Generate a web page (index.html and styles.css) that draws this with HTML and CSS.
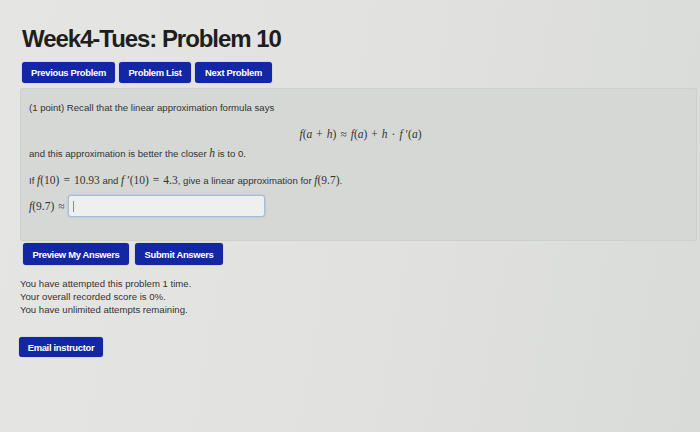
FILE: index.html
```html
<!DOCTYPE html>
<html lang="en">
<head>
<meta charset="utf-8">
<title>Week4-Tues: Problem 10</title>
<link rel="stylesheet" href="styles.css">
</head>
<body>
<div class="page">
  <h1 class="title">Week4-Tues: Problem 10</h1>
  <div class="nav">
    <a class="btn w-prev">Previous Problem</a>
    <a class="btn w-list">Problem List</a>
    <a class="btn w-next">Next Problem</a>
  </div>
  <div class="problem">
    <p class="line">(1 point) Recall that the linear approximation formula says</p>
    <p class="formula"><span class="v">f</span>(<span class="v">a</span><span class="op">+</span><span class="v">h</span>)<span class="op">≈</span><span class="v">f</span>(<span class="v">a</span>)<span class="op">+</span><span class="v">h</span><span class="op">·</span><span class="v">f</span> ′(<span class="v">a</span>)</p>
    <p class="line l2">and this approximation is better the closer <span class="m v">h</span> is to 0.</p>
    <p class="line l3">If <span class="m"><span class="v">f</span>(10)<span class="op">=</span>10.93</span> and <span class="m"><span class="v">f</span> ′(10)<span class="op">=</span>4.3</span>, give a linear approximation for <span class="m"><span class="v">f</span>(9.7)</span>.</p>
    <div class="answer">
      <span class="m"><span class="v">f</span>(9.7)<span class="op op-end">≈</span></span>
      <div class="input"><span class="caret"></span></div>
    </div>
  </div>
  <div class="actions">
    <a class="btn w-preview">Preview My Answers</a>
    <a class="btn w-submit">Submit Answers</a>
  </div>
  <div class="status">
    <p>You have attempted this problem 1 time.</p>
    <p>Your overall recorded score is 0%.</p>
    <p>You have unlimited attempts remaining.</p>
  </div>
  <div class="email">
    <a class="btn w-email">Email instructor</a>
  </div>
</div>
</body>
</html>
```
FILE: styles.css
```css
html, body {
  margin: 0;
  height: 100%;
}
body {
  background: linear-gradient(100deg, #e5e6e3 0%, #e1e2df 55%, #d9dbd8 100%);
  font-family: "Liberation Sans", Arial, sans-serif;
  color: #333;
  overflow: hidden;
}
.page {
  padding: 25px 0 0 20px;
}
.title {
  margin: 0 0 0 2px;
  font-size: 24px;
  line-height: 28px;
  font-weight: bold;
  letter-spacing: -1.05px;
  color: #1e1e1e;
}
.nav {
  display: flex;
  gap: 4px;
  margin: 9px 0 0 2px;
}
.btn {
  display: flex;
  align-items: center;
  justify-content: center;
  height: 21px;
  background: #1327a4;
  color: #fff;
  font-size: 9.4px;
  font-weight: bold;
  letter-spacing: -0.3px;
  border-radius: 3px;
  box-sizing: border-box;
  box-shadow: 0 0 1px rgba(0,0,40,0.5);
}
.w-prev { width: 93px; }
.w-list { width: 72px; }
.w-next { width: 77px; }
.w-preview { width: 106px; height: 22px; }
.w-submit { width: 88px; height: 22px; }
.w-email { width: 84px; height: 20px; }
.problem {
  margin-top: 5px;
  width: 677px;
  height: 153px;
  box-sizing: border-box;
  padding: 12px 8px 0 8px;
  background: #d6d8d5;
  border: 1px solid #cdd0cc;
  border-radius: 2px;
}
.line {
  margin: 0;
  font-size: 9.6px;
  line-height: 13px;
}
.m {
  font-family: "Liberation Serif", "Times New Roman", serif;
  font-size: 11.5px;
}
.v {
  font-style: italic;
}
.op {
  margin: 0 4px;
}
.op-end {
  margin-right: 0;
}
.formula {
  margin: 13px 0 0 0;
  text-align: center;
  font-family: "Liberation Serif", "Times New Roman", serif;
  font-size: 11.5px;
  line-height: 14px;
  padding-left: 4px;
}
.l2 { margin-top: 6px; }
.l3 { margin-top: 14px; }
.answer {
  display: flex;
  align-items: center;
  gap: 3px;
  margin-top: 8px;
}
.input {
  width: 197px;
  height: 22px;
  box-sizing: border-box;
  background: #eef0ee;
  border: 1px solid #9fbfdc;
  border-radius: 3px;
  box-shadow: 0 0 2px rgba(100,150,210,0.6);
  display: flex;
  align-items: center;
  padding-left: 4px;
}
.caret {
  width: 1px;
  height: 11px;
  background: #8a8c8a;
}
.actions {
  display: flex;
  gap: 6px;
  margin: 2px 0 0 3px;
}
.status {
  margin-top: 12px;
}
.status p {
  margin: 0;
  font-size: 9.6px;
  line-height: 13px;
}
.email {
  margin-top: 21px;
  display: flex;
  margin-left: -1px;
}
```
